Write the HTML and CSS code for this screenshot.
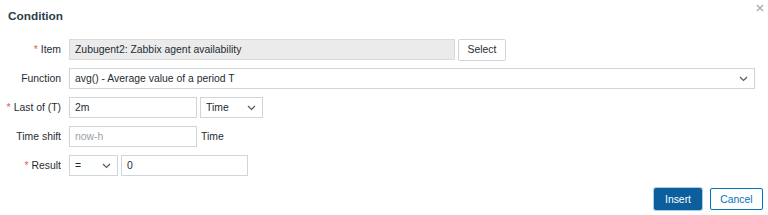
FILE: index.html
```html
<!DOCTYPE html>
<html>
<head>
<meta charset="utf-8">
<link rel="stylesheet" href="styles.css">
</head>
<body>
<div class="dialog">
  <div class="head">
    <h2 class="title">Condition</h2>
    <button class="close" type="button" aria-label="Close">
      <svg width="8" height="8" viewBox="0 0 8 8"><path d="M1 1L7 7M7 1L1 7" stroke="#a9b3ba" stroke-width="1.6" fill="none"/></svg>
    </button>
  </div>
  <form class="form">
    <label class="lbl"><span class="req">*</span> Item</label>
    <div class="fld">
      <div class="input ro w-item">Zubugent2: Zabbix agent availability</div>
      <button type="button" class="btn-alt">Select</button>
    </div>

    <label class="lbl">Function</label>
    <div class="fld">
      <div class="select w-func"><span>avg() - Average value of a period T</span>
        <svg class="chev" width="9" height="6" viewBox="0 0 9 6"><path d="M1 1l3.5 3.5L8 1" stroke="#4f5b63" stroke-width="1.2" fill="none"/></svg></div>
    </div>

    <label class="lbl"><span class="req">*</span> Last of (T)</label>
    <div class="fld">
      <div class="input w-short">2m</div>
      <div class="select w-time"><span>Time</span>
        <svg class="chev" width="9" height="6" viewBox="0 0 9 6"><path d="M1 1l3.5 3.5L8 1" stroke="#4f5b63" stroke-width="1.2" fill="none"/></svg></div>
    </div>

    <label class="lbl">Time shift</label>
    <div class="fld">
      <div class="input w-short ph">now-h</div>
      <span class="unit">Time</span>
    </div>

    <label class="lbl"><span class="req">*</span> Result</label>
    <div class="fld">
      <div class="select w-op"><span>=</span>
        <svg class="chev" width="9" height="6" viewBox="0 0 9 6"><path d="M1 1l3.5 3.5L8 1" stroke="#4f5b63" stroke-width="1.2" fill="none"/></svg></div>
      <div class="input w-val">0</div>
    </div>
  </form>
  <div class="foot">
    <button type="button" class="btn-main">Insert</button>
    <button type="button" class="btn-cancel">Cancel</button>
  </div>
</div>
</body>
</html>
```

FILE: styles.css
```css
* { box-sizing: border-box; }
html, body { margin: 0; padding: 0; background: #ffffff; }
body {
  font-family: "Liberation Sans", Arial, sans-serif;
  font-size: 10.4px;
  color: #1f2c33;
}
.dialog {
  position: relative;
  width: 768px;
  height: 215px;
  padding: 8px 5px 0 8px;
}
.head { height: 16px; }
.title {
  margin: 0;
  font-size: 11.8px;
  line-height: 16px;
  font-weight: bold;
  color: #2d3e4a;
}
.close {
  position: absolute;
  top: 3px;
  right: 3px;
  width: 10px;
  height: 10px;
  padding: 0;
  border: 0;
  background: none;
  display: flex;
  align-items: center;
  justify-content: center;
}
.form {
  display: grid;
  grid-template-columns: 53px 1fr;
  grid-auto-rows: 21px;
  column-gap: 8px;
  row-gap: 8px;
  margin-top: 15px;
  padding-right: 8px;
}
.lbl {
  display: flex;
  align-items: center;
  justify-content: flex-end;
  white-space: nowrap;
  color: #1f2c33;
}
.req { color: #e45959; margin-right: 3px; }
.fld {
  display: flex;
  align-items: center;
  gap: 3px;
}
.input, .select {
  height: 21px;
  border: 1px solid #cfd6da;
  background: #ffffff;
  padding: 0 5px;
  display: flex;
  align-items: center;
  color: #1f2c33;
  white-space: nowrap;
}
.ro { background: #ebebeb; border-color: #dadada; }
.ph { color: #9aa2a7; }
.select { justify-content: space-between; padding-right: 6px; }
.chev { flex: none; }
.w-item { width: 386px; }
.w-func { width: 686px; }
.w-short { width: 128px; }
.w-time { width: 63px; }
.w-op { width: 49px; }
.w-val { width: 127px; }
.unit { margin-left: 1px; }
.btn-alt {
  height: 22px;
  width: 48px;
  border: 1px solid #cfd6da;
  border-radius: 2px;
  background: #ffffff;
  font: inherit;
  color: #1f2c33;
  padding: 0;
}
.foot {
  display: flex;
  justify-content: flex-end;
  gap: 8px;
  margin-top: 12px;
}
.btn-main, .btn-cancel {
  height: 22px;
  border-radius: 2px;
  font: inherit;
  padding: 0;
}
.btn-main {
  width: 48px;
  background: #0b5f9c;
  border: 1px solid #0b5f9c;
  color: #ffffff;
  box-shadow: 0 0 0 1px #a8cde8;
}
.btn-cancel {
  width: 53px;
  background: #ffffff;
  border: 1px solid #0275b8;
  color: #0275b8;
}
```
